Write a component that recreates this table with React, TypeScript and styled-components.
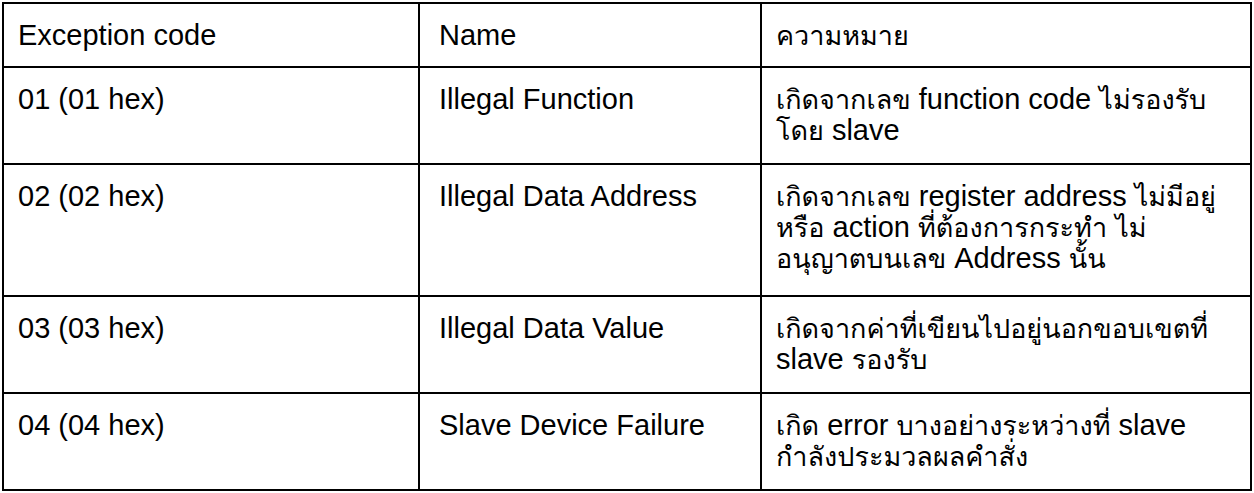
import React from 'react'
import styled, { createGlobalStyle } from 'styled-components'

const GlobalStyle = createGlobalStyle`
  html, body {
    margin: 0;
    padding: 0;
    background: #ffffff;
  }
`

type Row = {
  code: string
  name: string
  meaning: string[]
  extra?: number
}

const rows: Row[] = [
  {
    code: '01 (01 hex)',
    name: 'Illegal Function',
    meaning: ['เกิดจากเลข function code ไม่รองรับ', 'โดย slave'],
  },
  {
    code: '02 (02 hex)',
    name: 'Illegal Data Address',
    meaning: [
      'เกิดจากเลข register address ไม่มีอยู่',
      'หรือ action ที่ต้องการกระทำ ไม่',
      'อนุญาตบนเลข Address นั้น',
    ],
    extra: 4,
  },
  {
    code: '03 (03 hex)',
    name: 'Illegal Data Value',
    meaning: ['เกิดจากค่าที่เขียนไปอยู่นอกขอบเขตที่', 'slave รองรับ'],
  },
  {
    code: '04 (04 hex)',
    name: 'Slave Device Failure',
    meaning: ['เกิด error บางอย่างระหว่างที่ slave', 'กำลังประมวลผลคำสั่ง'],
  },
]

const Page = styled.div`
  padding: 2px 0 0 2px;
`

const Table = styled.table`
  border-collapse: collapse;
  table-layout: fixed;
  width: 1250px;
  font-family: 'Liberation Sans', Arial, Loma, 'Noto Sans Thai Looped',
    'Noto Sans Thai', Tahoma, sans-serif;
  font-size: 29px;
  line-height: 31px;
  color: #000000;
`

// header cells sit a little tighter at the bottom than body cells
const Cell = styled.td<{ $pad: number; $bottom?: number }>`
  border: 2px solid #000000;
  vertical-align: top;
  padding: 16px 8px ${({ $bottom = 17 }) => $bottom}px
    ${({ $pad }) => $pad}px;
  white-space: nowrap;
`

const Line = styled.div`
  height: 31px;
`

// the Thai fallback face runs wider than the original, so shrink it;
// line-height 0 keeps it from stretching the row
const Thai = styled.span`
  font-size: 27px;
  line-height: 0;
`

const THAI = /([\u0E00-\u0E7F]+)/

function Mixed({ text }: { text: string }) {
  return (
    <>
      {text.split(THAI).map((part, i) =>
        THAI.test(part) ? <Thai key={i}>{part}</Thai> : part
      )}
    </>
  )
}

export default function App() {
  return (
    <Page>
      <GlobalStyle />
      <Table>
        <colgroup>
          <col style={{ width: 416 }} />
          <col style={{ width: 342 }} />
          <col />
        </colgroup>
        <tbody>
          <tr>
            <Cell $pad={14} $bottom={15}>Exception code</Cell>
            <Cell $pad={19} $bottom={15}>Name</Cell>
            <Cell $pad={14} $bottom={15}>
              <Line>
                <Mixed text="ความหมาย" />
              </Line>
            </Cell>
          </tr>
          {rows.map((r) => {
            const bottom = 17 + (r.extra ?? 0)
            return (
              <tr key={r.code}>
                <Cell $pad={14} $bottom={bottom}>{r.code}</Cell>
                <Cell $pad={19} $bottom={bottom}>{r.name}</Cell>
                <Cell $pad={14} $bottom={bottom}>
                  {r.meaning.map((m) => (
                    <Line key={m}>
                      <Mixed text={m} />
                    </Line>
                  ))}
                </Cell>
              </tr>
            )
          })}
        </tbody>
      </Table>
    </Page>
  )
}
